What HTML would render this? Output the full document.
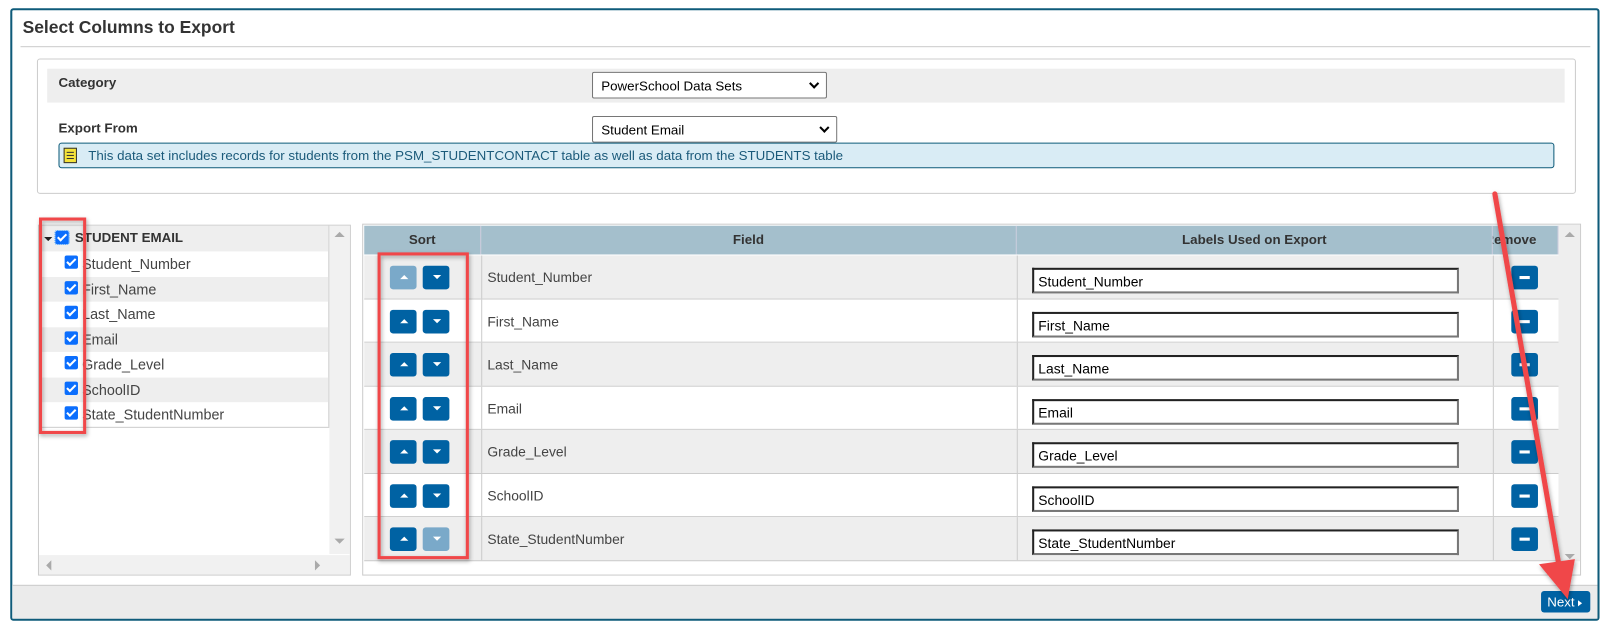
<!DOCTYPE html>
<html><head><meta charset="utf-8"><style>
*{box-sizing:border-box;margin:0;padding:0}
body{width:1608px;height:630px;background:#fff;overflow:hidden;font-family:"Liberation Sans",Arial,sans-serif;color:#333;font-size:13px}
#s{position:absolute;left:0;top:0;width:1560px;height:612px;transform:scale(1.026,1.026);transform-origin:0 0}
.a{position:absolute}
.frame{left:10px;top:8px;width:1549px;height:597px;border:2px solid #0f5b7a;border-radius:3px}
.title{left:22px;top:17px;font-size:17px;font-weight:bold;color:#333}
.sel{background:#fff;border:1px solid #767676;border-radius:2px;font-size:13px;color:#000;padding:5px 8px}
.sel:after{content:"";position:absolute;right:8px;top:7px;width:5px;height:5px;border-right:2px solid #000;border-bottom:2px solid #000;transform:rotate(45deg)}
.cb{position:absolute;width:13px;height:13px;background:#0b6efd;border-radius:2px}
.cb:after{content:"";position:absolute;left:4px;top:1px;width:3px;height:7px;border-right:2px solid #fff;border-bottom:2px solid #fff;transform:rotate(45deg)}
.tr{position:absolute;left:38px;width:282px;height:24.5px;font-size:14px;color:#444}
.tr span{position:absolute;left:42px;top:4px}
.btn{position:absolute;width:26px;height:23px;background:#0062a3;border-radius:3px}
.btn.dis{background:#7aa9c9}
.up:after,.dn:after{content:"";position:absolute;left:10px;top:9px;border-left:4px solid transparent;border-right:4px solid transparent}
.up:after{border-bottom:4px solid #fff}
.dn:after{border-top:4px solid #fff}
.mi:after{content:"";position:absolute;left:8px;top:10px;width:10px;height:3px;background:#fff}
.row{position:absolute;left:355px;width:1164px;height:42.5px;border-bottom:1px solid #ccc}
.row .f{position:absolute;left:120px;top:14px;font-size:13.5px;color:#444}
.inp{position:absolute;left:651px;top:12px;width:416px;height:25px;border:2px solid #222;border-right-color:#777;border-bottom-color:#777;background:#fff;font-size:13.5px;color:#000;padding:4px 4px}
.vl{position:absolute;top:0;bottom:0;width:1px;background:#ccc}
.th{position:absolute;top:220px;height:28px;background:#a4bfcc;font-weight:bold;font-size:13px;color:#333;text-align:center;line-height:28px;border-right:1px solid #ccd;overflow:hidden;white-space:nowrap}
</style></head><body><div id="s">
<div class="a frame"></div>
<div class="a title">Select Columns to Export</div>
<div class="a" style="left:20px;top:45px;width:1530px;height:1px;background:#ccc"></div>
<div class="a" style="left:36px;top:57px;width:1500px;height:132px;border:1px solid #ccc;border-radius:3px"></div>
<div class="a" style="left:46px;top:67px;width:1479px;height:33px;background:#eee"></div>
<div class="a" style="left:57px;top:73px;font-weight:bold;font-size:13px">Category</div>
<div class="a sel" style="left:577px;top:70px;width:229px;height:26px">PowerSchool Data Sets</div>
<div class="a" style="left:57px;top:117px;font-weight:bold;font-size:13px">Export From</div>
<div class="a sel" style="left:577px;top:113px;width:239px;height:26px">Student Email</div>
<div class="a" style="left:57px;top:139px;width:1458px;height:25px;background:#d9ecf5;border:1px solid #0f5b7a;border-radius:3px;color:#1b5a7a;font-size:13px;padding:4px 0 0 28px">This data set includes records for students from the PSM_STUDENTCONTACT table as well as data from the STUDENTS table</div>
<div class="a" style="left:62px;top:144px;width:13px;height:15px;background:#f5e33a;border:1.5px solid #333"><div style="margin:3px 2px;height:1px;background:#333;box-shadow:0 3px 0 #333,0 6px 0 #333"></div></div>

<div class="a" style="left:37px;top:219px;width:305px;height:342px;border:1px solid #ccc;background:#fff"></div>
<div class="a" style="left:321px;top:220px;width:20px;height:320px;background:#f1f1f1"></div>
<div class="a" style="left:38px;top:541px;width:303px;height:19px;background:#f1f1f1"></div>
<div class="a" style="left:326px;top:226px;border-left:5px solid transparent;border-right:5px solid transparent;border-bottom:5px solid #aaa"></div>
<div class="a" style="left:326px;top:525px;border-left:5px solid transparent;border-right:5px solid transparent;border-top:5px solid #aaa"></div>
<div class="a" style="left:45px;top:546px;border-top:5px solid transparent;border-bottom:5px solid transparent;border-right:5px solid #aaa"></div>
<div class="a" style="left:307px;top:546px;border-top:5px solid transparent;border-bottom:5px solid transparent;border-left:5px solid #aaa"></div>
<div class="a" style="left:320px;top:220px;width:1px;height:196px;background:#ccc"></div>
<div class="a" style="left:38px;top:416px;width:283px;height:1px;background:#ccc"></div>
<div class="tr" style="top:220px;background:#eee"><div class="a" style="left:5px;top:11px;border-left:4px solid transparent;border-right:4px solid transparent;border-top:4px solid #222"></div><div class="cb" style="left:16px;top:5px;outline:1px dotted #39f"></div><span style="left:35px;font-weight:bold;font-size:13px;color:#333">STUDENT EMAIL</span></div>
<div class="tr" style="top:245px"><div class="cb" style="left:25px;top:4px"></div><span>Student_Number</span></div>
<div class="tr" style="top:269.5px;background:#eee"><div class="cb" style="left:25px;top:4px"></div><span>First_Name</span></div>
<div class="tr" style="top:294px"><div class="cb" style="left:25px;top:4px"></div><span>Last_Name</span></div>
<div class="tr" style="top:318.5px;background:#eee"><div class="cb" style="left:25px;top:4px"></div><span>Email</span></div>
<div class="tr" style="top:343px"><div class="cb" style="left:25px;top:4px"></div><span>Grade_Level</span></div>
<div class="tr" style="top:367.5px;background:#eee"><div class="cb" style="left:25px;top:4px"></div><span>SchoolID</span></div>
<div class="tr" style="top:392px"><div class="cb" style="left:25px;top:4px"></div><span>State_StudentNumber</span></div>

<div class="a" style="left:353px;top:218px;height:343px;border:1px solid #ccc;width:1188px;background:#fff"></div>
<div class="a" style="left:1519px;top:219px;width:21px;height:328px;background:#eee"></div>
<div class="a" style="left:1525px;top:226px;border-left:5px solid transparent;border-right:5px solid transparent;border-bottom:5px solid #aaa"></div>
<div class="a" style="left:1525px;top:540px;border-left:5px solid transparent;border-right:5px solid transparent;border-top:5px solid #aaa"></div>
<div class="th" style="left:355px;width:114px;top:220px">Sort</div>
<div class="th" style="left:469px;width:522px">Field</div>
<div class="th" style="left:991px;width:464px">Labels Used on Export</div>
<div class="th" style="left:1455px;width:64px;text-align:left;text-indent:-8px;padding-left:0">Remove</div>

<div class="row" style="top:249px;background:#eee"><div class="vl" style="left:114px"></div><div class="vl" style="left:636px"></div><div class="vl" style="left:1100px"></div><div class="btn up dis" style="left:25px;top:10px"></div><div class="btn dn" style="left:57px;top:10px"></div><div class="f">Student_Number</div><div class="inp">Student_Number</div><div class="btn mi" style="left:1118px;top:10px"></div></div>
<div class="row" style="top:291.5px;background:#fff"><div class="vl" style="left:114px"></div><div class="vl" style="left:636px"></div><div class="vl" style="left:1100px"></div><div class="btn up" style="left:25px;top:10px"></div><div class="btn dn" style="left:57px;top:10px"></div><div class="f">First_Name</div><div class="inp">First_Name</div><div class="btn mi" style="left:1118px;top:10px"></div></div>
<div class="row" style="top:334px;background:#eee"><div class="vl" style="left:114px"></div><div class="vl" style="left:636px"></div><div class="vl" style="left:1100px"></div><div class="btn up" style="left:25px;top:10px"></div><div class="btn dn" style="left:57px;top:10px"></div><div class="f">Last_Name</div><div class="inp">Last_Name</div><div class="btn mi" style="left:1118px;top:10px"></div></div>
<div class="row" style="top:376.5px;background:#fff"><div class="vl" style="left:114px"></div><div class="vl" style="left:636px"></div><div class="vl" style="left:1100px"></div><div class="btn up" style="left:25px;top:10px"></div><div class="btn dn" style="left:57px;top:10px"></div><div class="f">Email</div><div class="inp">Email</div><div class="btn mi" style="left:1118px;top:10px"></div></div>
<div class="row" style="top:419px;background:#eee"><div class="vl" style="left:114px"></div><div class="vl" style="left:636px"></div><div class="vl" style="left:1100px"></div><div class="btn up" style="left:25px;top:10px"></div><div class="btn dn" style="left:57px;top:10px"></div><div class="f">Grade_Level</div><div class="inp">Grade_Level</div><div class="btn mi" style="left:1118px;top:10px"></div></div>
<div class="row" style="top:461.5px;background:#fff"><div class="vl" style="left:114px"></div><div class="vl" style="left:636px"></div><div class="vl" style="left:1100px"></div><div class="btn up" style="left:25px;top:10px"></div><div class="btn dn" style="left:57px;top:10px"></div><div class="f">SchoolID</div><div class="inp">SchoolID</div><div class="btn mi" style="left:1118px;top:10px"></div></div>
<div class="row" style="top:504px;background:#eee"><div class="vl" style="left:114px"></div><div class="vl" style="left:636px"></div><div class="vl" style="left:1100px"></div><div class="btn up" style="left:25px;top:10px"></div><div class="btn dn dis" style="left:57px;top:10px"></div><div class="f">State_StudentNumber</div><div class="inp">State_StudentNumber</div><div class="btn mi" style="left:1118px;top:10px"></div></div>

<div class="a" style="left:12px;top:570px;width:1545px;height:33px;background:#ebebeb;border-top:1px solid #ccc"></div>
<div class="a" style="left:1502px;top:576px;width:48px;height:21px;background:#0062a3;border-radius:3px;color:#fff;font-size:13px;line-height:21px;padding-left:6px">Next<span style="display:inline-block;margin-left:3px;border-top:3.5px solid transparent;border-bottom:3.5px solid transparent;border-left:4px solid #fff"></span></div>

<svg class="a" style="left:0;top:0" width="1560" height="612">
<defs><filter id="sh"><feDropShadow dx="1" dy="2" stdDeviation="2" flood-opacity="0.35"/></filter></defs>
<g filter="url(#sh)" fill="none" stroke="#f0474a" stroke-width="3">
<rect x="39.5" y="213.5" width="43" height="208"/>
<rect x="369.5" y="247.5" width="86" height="296"/>
<line x1="1457" y1="189" x2="1521" y2="560" stroke-width="5" stroke-linecap="round"/>
</g>
<polygon filter="url(#sh)" points="1500,550 1535,545 1528,584" fill="#f0474a"/>
</svg>
</div></body></html>
